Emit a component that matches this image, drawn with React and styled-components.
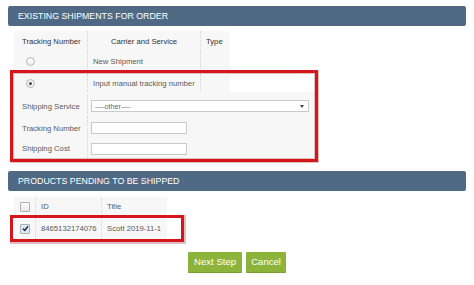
import React from "react";
import styled, { createGlobalStyle } from "styled-components";

const Global = createGlobalStyle`
  html, body { margin: 0; padding: 0; background: #fff; }
  body { font-family: "Liberation Sans", Arial, sans-serif; }
`;

const Page = styled.div`
  width: 474px;
  height: 285px;
  box-sizing: border-box;
  padding: 6px 8px 0 8px;
  overflow: hidden;
`;

const SectionBar = styled.div`
  height: 20px;
  border-radius: 2px;
  background: #506a85;
  color: #fff;
  font-size: 8.8px;
  line-height: 20px;
  padding-left: 10px;
  margin-top: ${(p) => p.$mt || 0}px;
`;

const Table = styled.div`
  margin-left: 6px;
  margin-top: ${(p) => p.$mt || 0}px;
  width: ${(p) => p.$w}px;
  font-size: 7.7px;
  color: #555;
`;

const Row = styled.div`
  display: grid;
  grid-template-columns: ${(p) => p.$cols};
  height: ${(p) => p.$h || 20}px;
  background: #f7f7f7;
`;

const Cell = styled.div`
  display: flex;
  align-items: center;
  justify-content: ${(p) => (p.$center ? "center" : "flex-start")};
  padding-left: ${(p) => (p.$center ? 0 : p.$pl ?? 5)}px;
  border-left: ${(p) => (p.$first ? "none" : "1px dotted #d6d6d6")};
  color: ${(p) => (p.$head ? "#333" : "#5a5a5a")};
  background: ${(p) => (p.$blank ? "#fff" : "transparent")};
  white-space: nowrap;
`;

const Highlight = styled.div`
  position: relative;
  width: ${(p) => p.$w}px;
  outline: 3px solid #d5161c;
  outline-offset: ${(p) => p.$off ?? 1}px;
  box-shadow: 1px 1px 0 4px rgba(120, 0, 0, 0.25);
  margin-top: ${(p) => p.$mt || 0}px;
  margin-left: ${(p) => p.$ml || 0}px;
`;

const Radio = styled.span`
  width: 7px;
  height: 7px;
  border-radius: 50%;
  border: 1px solid #b8b8b8;
  background: radial-gradient(circle at 50% 40%, #fff 0%, #e4e4e4 100%);
  display: inline-flex;
  align-items: center;
  justify-content: center;
  margin-left: 7px;
  &::after {
    content: "";
    width: 3px;
    height: 3px;
    border-radius: 50%;
    background: ${(p) => (p.$checked ? "#444" : "transparent")};
  }
`;

const Check = styled.span`
  width: 8px;
  height: 8px;
  border: 1px solid #b0b0b0;
  border-radius: 1px;
  background: ${(p) => (p.$checked ? "#dfe8f5" : "linear-gradient(#fff, #e6e6e6)")};
  display: inline-flex;
  align-items: center;
  justify-content: center;
  margin-left: 6px;
`;

const FieldBox = styled.div`
  height: 10px;
  width: ${(p) => p.$w}px;
  border: 1px solid #c9c9c9;
  background: #fff;
  margin-left: 3px;
  display: flex;
  align-items: center;
  justify-content: space-between;
  padding: 0 3px;
  box-sizing: content-box;
  font-size: 7.2px;
  color: #666;
`;

const Arrow = styled.span`
  width: 0;
  height: 0;
  border-left: 2px solid transparent;
  border-right: 2px solid transparent;
  border-top: 3px solid #444;
  margin-right: 1px;
`;

const Buttons = styled.div`
  display: flex;
  justify-content: center;
  gap: 4px;
  margin-top: 13px;
`;

const Button = styled.div`
  height: 20px;
  padding: 0 ${(p) => p.$px}px;
  background: #8db43a;
  color: #fff;
  font-size: 9.6px;
  line-height: 20px;
  border-radius: 1px;
  box-shadow: 0 1px 0 #7a9e2e;
`;

const cols1 = "73px 113px 30px";
const formCols = "73px 223px";
const cols2 = "21px 66px 66px";

export default function App() {
  return (
    <Page>
      <Global />
      <SectionBar>EXISTING SHIPMENTS FOR ORDER</SectionBar>
      <Table $mt={5} $w={216}>
        <Row $cols={cols1} $h={20}>
          <Cell $first $head $pl={8}>Tracking Number</Cell>
          <Cell $head $center>Carrier and Service</Cell>
          <Cell $head>Type</Cell>
        </Row>
        <Row $cols={cols1} $h={20}>
          <Cell $first><Radio /></Cell>
          <Cell>New Shipment</Cell>
          <Cell />
        </Row>
      </Table>
      <Table $w={300}>
        <Highlight $w={300} $mt={3}>
          <Row $cols={cols1 + " 84px"} $h={18}>
            <Cell $first><Radio $checked /></Cell>
            <Cell>Input manual tracking number</Cell>
            <Cell />
            <Cell $blank $first />
          </Row>
          <Row $cols={formCols} $h={3} />
          <Row $cols={formCols} $h={22}>
            <Cell $first $pl={8}>Shipping Service</Cell>
            <Cell $pl={0}>
              <FieldBox $w={210}>
                <span>----other----</span>
                <Arrow />
              </FieldBox>
            </Cell>
          </Row>
          <Row $cols={formCols} $h={22}>
            <Cell $first $pl={8}>Tracking Number</Cell>
            <Cell $pl={0}><FieldBox $w={88} /></Cell>
          </Row>
          <Row $cols={formCols} $h={19}>
            <Cell $first $pl={8}>Shipping Cost</Cell>
            <Cell $pl={0}><FieldBox $w={88} /></Cell>
          </Row>
        </Highlight>
      </Table>
      <SectionBar $mt={13}>PRODUCTS PENDING TO BE SHIPPED</SectionBar>
      <Table $mt={6} $w={153}>
        <Row $cols={cols2} $h={19}>
          <Cell $first $pl={0}><Check /></Cell>
          <Cell>ID</Cell>
          <Cell>Title</Cell>
        </Row>
        <Highlight $w={168} $mt={2} $ml={-1} $off={0}>
          <Row $cols={cols2} $h={21} style={{ width: 153, marginLeft: 1 }}>
            <Cell $first $pl={0}>
              <Check $checked>
                <svg width="7" height="7" viewBox="0 0 7 7">
                  <path d="M1 3.6 L2.8 5.4 L6 1.2" stroke="#1f2f55" strokeWidth="1.5" fill="none" />
                </svg>
              </Check>
            </Cell>
            <Cell>8465132174076</Cell>
            <Cell>Scott 2019-11-1</Cell>
          </Row>
        </Highlight>
      </Table>
      <Buttons>
        <Button $px={6}>Next Step</Button>
        <Button $px={5}>Cancel</Button>
      </Buttons>
    </Page>
  );
}
